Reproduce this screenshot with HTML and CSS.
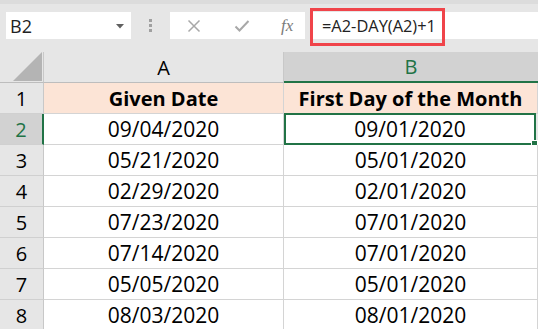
FILE: index.html
```html
<!DOCTYPE html>
<html>
<head>
<meta charset="utf-8">
<link rel="stylesheet" href="styles.css">
</head>
<body>
<div class="app">
  <div class="topstrip"></div>
  <div class="toolbar">
    <div class="namebox">
      <span class="name">B2</span>
      <svg class="caret" width="8" height="5" viewBox="0 0 8 5"><path d="M0 0H8L4 4.5Z" fill="#606060"/></svg>
    </div>
    <div class="sep"><i></i><i></i><i></i></div>
    <div class="fxbox">
      <svg class="ico" width="14" height="14" viewBox="0 0 14 14"><path d="M1.5 1.5L12.5 12.5M12.5 1.5L1.5 12.5" stroke="#a8a8a8" stroke-width="1.5" fill="none"/></svg>
      <svg class="ico chk" width="16" height="14" viewBox="0 0 16 14"><path d="M1.5 7.5L5.5 11.5L14.5 2" stroke="#a8a8a8" stroke-width="2" fill="none"/></svg>
      <span class="fx">fx</span>
    </div>
    <div class="formula">
      <span class="ftext">=A2-DAY(A2)+1</span>
      <div class="highlight"></div>
    </div>
  </div>
  <div class="sheet">
    <div class="corner"><svg width="29" height="29" viewBox="0 0 29 29"><path d="M29 0V29H0Z" fill="#b4b4b4"/></svg></div>
    <div class="colhead">A</div>
    <div class="colhead sel">B</div>

    <div class="rowhead">1</div>
    <div class="cell hdr">Given Date</div>
    <div class="cell hdr">First Day of the Month</div>

    <div class="rowhead sel">2</div>
    <div class="cell">09/04/2020</div>
    <div class="cell active">09/01/2020<span class="handle"></span></div>

    <div class="rowhead">3</div>
    <div class="cell">05/21/2020</div>
    <div class="cell">05/01/2020</div>

    <div class="rowhead">4</div>
    <div class="cell">02/29/2020</div>
    <div class="cell">02/01/2020</div>

    <div class="rowhead">5</div>
    <div class="cell">07/23/2020</div>
    <div class="cell">07/01/2020</div>

    <div class="rowhead">6</div>
    <div class="cell">07/14/2020</div>
    <div class="cell">07/01/2020</div>

    <div class="rowhead">7</div>
    <div class="cell">05/05/2020</div>
    <div class="cell">05/01/2020</div>

    <div class="rowhead">8</div>
    <div class="cell">08/03/2020</div>
    <div class="cell">08/01/2020</div>
  </div>
</div>
</body>
</html>
```

FILE: styles.css
```css
html, body {
  margin: 0;
  padding: 0;
  background: #e6e6e6;
  overflow: hidden;
}
.app {
  width: 538px;
  height: 329px;
  overflow: hidden;
  font-family: "Open Sans", "Noto Sans", sans-serif;
  color: #000;
}
.topstrip {
  height: 4px;
  background: #dcdcdc;
}
.toolbar {
  height: 48px;
  display: flex;
  align-items: flex-start;
  padding-top: 8px;
  box-sizing: border-box;
  position: relative;
}
.namebox {
  margin-left: 6px;
  width: 125px;
  height: 27px;
  background: #fff;
  display: flex;
  align-items: center;
  justify-content: space-between;
  padding: 0 7px 0 4px;
  box-sizing: border-box;
}
.name {
  font-size: 18px;
  color: #222;
}
.caret { margin-top: 1px; }
.sep {
  width: 39px;
  height: 27px;
  display: flex;
  flex-direction: column;
  align-items: center;
  justify-content: center;
  gap: 2px;
}
.sep i {
  display: block;
  width: 3px;
  height: 3px;
  background: #a0a0a0;
}
.fxbox {
  width: 135px;
  height: 27px;
  background: #fff;
  display: flex;
  align-items: center;
  padding-left: 17px;
  box-sizing: border-box;
}
.chk { margin-left: 33px; }
.fx {
  margin-left: 31px;
  font-family: "Liberation Serif", serif;
  font-style: italic;
  font-size: 17px;
  color: #7a7a7a;
}
.formula {
  margin-left: 5px;
  flex: 1;
  height: 27px;
  background: #fff;
  display: flex;
  align-items: center;
  position: relative;
}
.ftext {
  margin-left: 12px;
  font-size: 16.4px;
  color: #222;
}
.highlight {
  position: absolute;
  left: 0;
  top: -4px;
  width: 135px;
  height: 38px;
  border: 3px solid #f0444a;
  box-sizing: border-box;
}
.sheet {
  display: grid;
  grid-template-columns: 44px 240px 254px;
  grid-template-rows: 31px repeat(8, 31px);
}
.corner {
  border-right: 1px solid #c8c8c8;
  border-bottom: 1px solid #bdbdbd;
  display: flex;
  align-items: flex-end;
  justify-content: flex-end;
  padding: 0 1px 1px 0;
  box-sizing: border-box;
}
.colhead {
  display: flex;
  align-items: center;
  justify-content: center;
  font-size: 20px;
  background: #e6e6e6;
  border-right: 1px solid #c8c8c8;
  border-bottom: 1px solid #bdbdbd;
  box-sizing: border-box;
}
.colhead.sel {
  background: #d2d2d2;
  color: #217346;
  border-bottom: 2px solid #217346;
  border-right: none;
}
.rowhead {
  display: flex;
  align-items: center;
  justify-content: center;
  font-size: 20px;
  background: #e6e6e6;
  border-right: 1px solid #c8c8c8;
  border-bottom: 1px solid #d0d0d0;
  box-sizing: border-box;
}
.rowhead.sel {
  background: #d2d2d2;
  color: #217346;
  border-right: 2px solid #217346;
}
.cell {
  display: flex;
  align-items: center;
  justify-content: center;
  font-size: 21px;
  background: #fff;
  border-right: 1px solid #d4d4d4;
  border-bottom: 1px solid #d4d4d4;
  box-sizing: border-box;
  position: relative;
}
.cell.hdr {
  background: #fce4d6;
  font-weight: 700;
  font-size: 20px;
}
.cell.active {
  border: 2px solid #217346;
  margin-top: -1px;
  margin-right: 2px;
}
.handle {
  position: absolute;
  right: -4px;
  bottom: -4px;
  width: 5px;
  height: 5px;
  background: #217346;
  border: 1px solid #fff;
}
```
